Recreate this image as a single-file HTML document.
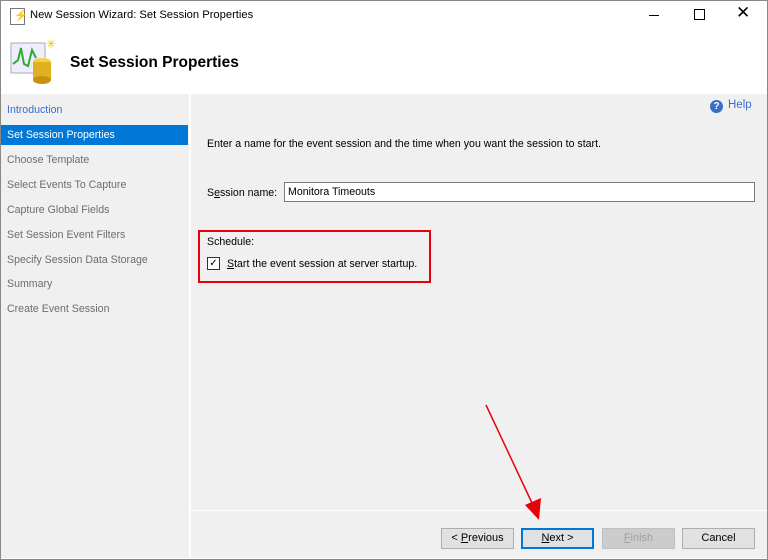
<!DOCTYPE html>
<html><head><style>
body{margin:0;width:768px;height:560px;overflow:hidden;font-family:"Liberation Sans",sans-serif;font-size:10.6px;color:#000;background:#fff;position:relative}
.a{position:absolute}
.nav{left:7px;color:#6d6d6d}
.btn{top:528px;height:19px;width:71px;border:1px solid #adadad;background:#e1e1e1;text-align:center;line-height:19px;font-size:11px}
</style></head><body>
<div class="a" style="left:0;top:0;width:766px;height:558px;border:1px solid #888"></div>
<div class="a" style="left:10px;top:8px;width:13px;height:15px;border:1px solid #777;background:#fff"></div>
<div class="a" style="left:14px;top:9px;color:#e0a000;font-size:11px">⚡</div>
<div class="a" style="left:30px;top:9px;font-size:11.2px">New Session Wizard: Set Session Properties</div>
<div class="a" style="left:649px;top:15px;width:10px;height:1px;background:#000"></div>
<div class="a" style="left:694px;top:9px;width:9px;height:9px;border:1px solid #000"></div>
<div class="a" style="left:736px;top:3px;font-size:17px">✕</div>
<svg class="a" style="left:10px;top:38px" width="48" height="48">
<rect x="1" y="5" width="34" height="30" fill="#eef" stroke="#aab"/>
<path d="M3 26 L8 22 L11 10 L14 26 L18 28 L22 12 L26 20" stroke="#3a3" stroke-width="2" fill="none"/>
<ellipse cx="32" cy="24" rx="9" ry="4" fill="#f6d04a"/>
<rect x="23" y="24" width="18" height="18" fill="#e0b020"/>
<ellipse cx="32" cy="42" rx="9" ry="4" fill="#c99010"/>
<text x="36" y="10" fill="#f0c000" font-size="12">✳</text>
</svg>
<div class="a" style="left:70px;top:54px;font-size:15.5px;font-weight:bold">Set Session Properties</div>
<div class="a" style="left:1px;top:94px;width:188px;height:464px;background:#f0f0f0"></div>
<div class="a" style="left:191px;top:94px;width:576px;height:464px;background:#f0f0f0"></div>
<div class="a" style="left:1px;top:125px;width:187px;height:20px;background:#0078d7"></div>
<div class="a nav" style="top:104px;color:#3a6ed0">Introduction</div>
<div class="a nav" style="top:129px;color:#fff">Set Session Properties</div>
<div class="a nav" style="top:154px">Choose Template</div>
<div class="a nav" style="top:179px">Select Events To Capture</div>
<div class="a nav" style="top:204px">Capture Global Fields</div>
<div class="a nav" style="top:229px">Set Session Event Filters</div>
<div class="a nav" style="top:254px">Specify Session Data Storage</div>
<div class="a nav" style="top:278px">Summary</div>
<div class="a nav" style="top:303px">Create Event Session</div>
<div class="a" style="left:710px;top:100px;width:13px;height:13px;border-radius:50%;background:#3a6ec8;color:#fff;font-size:10px;text-align:center;line-height:13px;font-weight:bold">?</div>
<div class="a" style="left:728px;top:99px;color:#3a6ed0;font-size:11.5px">Help</div>
<div class="a" style="left:207px;top:138px">Enter a name for the event session and the time when you want the session to start.</div>
<div class="a" style="left:207px;top:187px">S<u>e</u>ssion name:</div>
<div class="a" style="left:284px;top:182px;width:466px;height:18px;border:1px solid #7a7a7a;background:#fff;line-height:18px;padding-left:3px;box-sizing:content-box">Monitora Timeouts</div>
<div class="a" style="left:207px;top:236px">Schedule:</div>
<div class="a" style="left:207px;top:257px;width:11px;height:11px;border:1px solid #333;background:#fff;font-size:10px;line-height:11px;text-align:center">✓</div>
<div class="a" style="left:227px;top:258px"><u>S</u>tart the event session at server startup.</div>
<div class="a" style="left:198px;top:230px;width:229px;height:49px;border:2px solid #e8000b"></div>
<div class="a" style="left:191px;top:510px;width:576px;height:1px;background:#fff"></div>
<div class="a btn" style="left:441px">&lt; <u>P</u>revious</div>
<div class="a btn" style="left:521px;border:2px solid #0078d7;height:17px;width:69px;line-height:17px"><u>N</u>ext &gt;</div>
<div class="a btn" style="left:602px;color:#a0a0a0;background:#ccc;border-color:#bfbfbf"><u>F</u>inish</div>
<div class="a btn" style="left:682px">Cancel</div>
<svg class="a" style="left:0;top:0" width="768" height="560">
<line x1="486" y1="405" x2="532" y2="503" stroke="#e8000b" stroke-width="1.5"/>
<polygon points="525,505 541,498 539,520" fill="#e8000b"/>
</svg>
</body></html>
